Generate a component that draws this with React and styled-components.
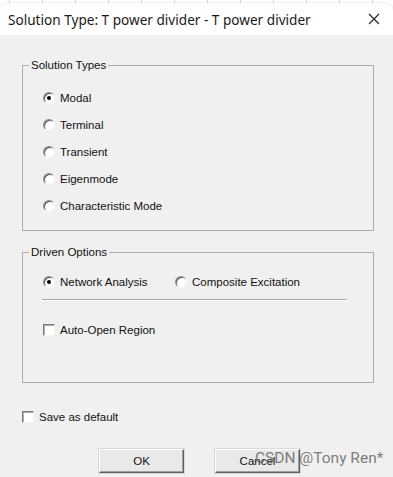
import React from 'react';
import styled, { createGlobalStyle } from 'styled-components';

const GlobalStyle = createGlobalStyle`
  html, body {
    margin: 0;
    padding: 0;
    background: #ffffff;
  }
  * {
    box-sizing: border-box;
  }
`;

const Page = styled.div`
  position: relative;
  width: 393px;
  height: 477px;
  overflow: hidden;
  padding-top: 3px;
  background-color: #ffffff;
  background-image: repeating-linear-gradient(
    to right,
    transparent 0,
    transparent 9px,
    #d4d4d4 9px,
    #d4d4d4 10px,
    transparent 10px,
    transparent 33px
  );
  font-family: 'Liberation Sans', Arial, sans-serif;
`;

const Window = styled.div`
  height: 100%;
  border-radius: 8px 8px 0 0;
  overflow: hidden;
  background: #f0f0f0;
  box-shadow: 0 0 2px rgba(0, 0, 0, 0.18);
  display: flex;
  flex-direction: column;
`;

const TitleBar = styled.div`
  height: 32px;
  flex-shrink: 0;
  display: flex;
  align-items: center;
  justify-content: space-between;
  padding: 0 12px 0 8px;
  background: #ffffff;
  font-family: 'Noto Sans', 'Open Sans', sans-serif;
  font-size: 13.6px;
  color: #1a1a1a;
`;

const CloseIcon = styled.svg`
  width: 12px;
  height: 12px;
  margin-right: 1px;
`;

const Body = styled.div`
  flex: 1;
  padding: 23px 19px 0 22px;
  font-size: 11.5px;
  color: #111;
`;

const Group = styled.fieldset`
  margin: 0 0 ${(p) => p.gap || 0}px 0;
  padding: ${(p) => p.pad};
  border: 1px solid #adadad;
  border-radius: 0;
  min-width: 0;
`;

const Legend = styled.legend`
  margin-left: -14px;
  padding: 0 2px;
  line-height: 14px;
  font-size: 11.5px;
`;

const Row = styled.div`
  height: 27px;
  display: flex;
  align-items: center;
`;

const Option = styled.label`
  display: flex;
  align-items: center;
  gap: 5px;
  width: ${(p) => (p.width ? `${p.width}px` : 'auto')};
`;

const Radio = styled.span`
  position: relative;
  width: 12px;
  height: 12px;
  border-radius: 50%;
  background: #ffffff;
  border: 1px solid;
  border-color: #8a8a8a #f4f4f4 #f4f4f4 #8a8a8a;
  box-shadow: inset 1px 1px 0 #5a5a5a;
  flex-shrink: 0;
  &::after {
    content: '';
    display: ${(p) => (p.checked ? 'block' : 'none')};
    position: absolute;
    left: 3px;
    top: 3px;
    width: 4px;
    height: 4px;
    border-radius: 50%;
    background: #000;
  }
`;

const Check = styled.span`
  width: 12px;
  height: 12px;
  background: #ffffff;
  border: 1px solid;
  border-color: #7a7a7a #f4f4f4 #f4f4f4 #7a7a7a;
  box-shadow: inset 1px 1px 0 #b0b0b0;
  flex-shrink: 0;
`;

const Separator = styled.div`
  width: 305px;
  height: 1px;
  margin: 4px 0 16px -1px;
  background: #a8a8a8;
  box-shadow: 0 1px 0 #ffffff;
`;

const SaveRow = styled.div`
  height: 20px;
  margin-top: 24px;
  display: flex;
  align-items: center;
`;

const Buttons = styled.div`
  display: flex;
  gap: 31px;
  margin-top: 22px;
  padding-left: 77px;
`;

const Button = styled.button`
  width: 85px;
  height: 24px;
  padding: 0;
  font-family: 'Liberation Sans', Arial, sans-serif;
  font-size: 11.5px;
  color: #111;
  background: #e9e9e9;
  border: 1px solid;
  border-color: #ffffff #5f5f5f #5f5f5f #ffffff;
  box-shadow: inset -1px -1px 0 #a0a0a0, 0 0 0 1px #d8d8d8;
`;

const Watermark = styled.div`
  position: absolute;
  left: 255px;
  top: 449px;
  font-family: Roboto, 'Noto Sans', sans-serif;
  font-size: 15.5px;
  color: rgba(110, 110, 110, 0.9);
  white-space: nowrap;
  pointer-events: none;
`;

const solutionTypes = ['Modal', 'Terminal', 'Transient', 'Eigenmode', 'Characteristic Mode'];

export default function App() {
  return (
    <Page>
      <GlobalStyle />
      <Window>
        <TitleBar>
          <span>Solution Type: T power divider - T power divider</span>
          <CloseIcon viewBox="0 0 12 12">
            <path d="M1 1 L11 11 M11 1 L1 11" stroke="#222" strokeWidth="1.1" fill="none" />
          </CloseIcon>
        </TitleBar>
        <Body>
          <Group pad="12px 0 11px 20px" gap={14}>
            <Legend>Solution Types</Legend>
            {solutionTypes.map((t, i) => (
              <Row key={t}>
                <Option>
                  <Radio checked={i === 0} />
                  {t}
                </Option>
              </Row>
            ))}
          </Group>
          <Group pad="9px 0 39px 20px">
            <Legend>Driven Options</Legend>
            <Row>
              <Option width={132}>
                <Radio checked />
                Network Analysis
              </Option>
              <Option>
                <Radio />
                Composite Excitation
              </Option>
            </Row>
            <Separator />
            <Row>
              <Option>
                <Check />
                Auto-Open Region
              </Option>
            </Row>
          </Group>
          <SaveRow>
            <Option>
              <Check />
              Save as default
            </Option>
          </SaveRow>
          <Buttons>
            <Button>OK</Button>
            <Button>Cancel</Button>
          </Buttons>
        </Body>
      </Window>
      <Watermark>CSDN @Tony Ren*</Watermark>
    </Page>
  );
}
